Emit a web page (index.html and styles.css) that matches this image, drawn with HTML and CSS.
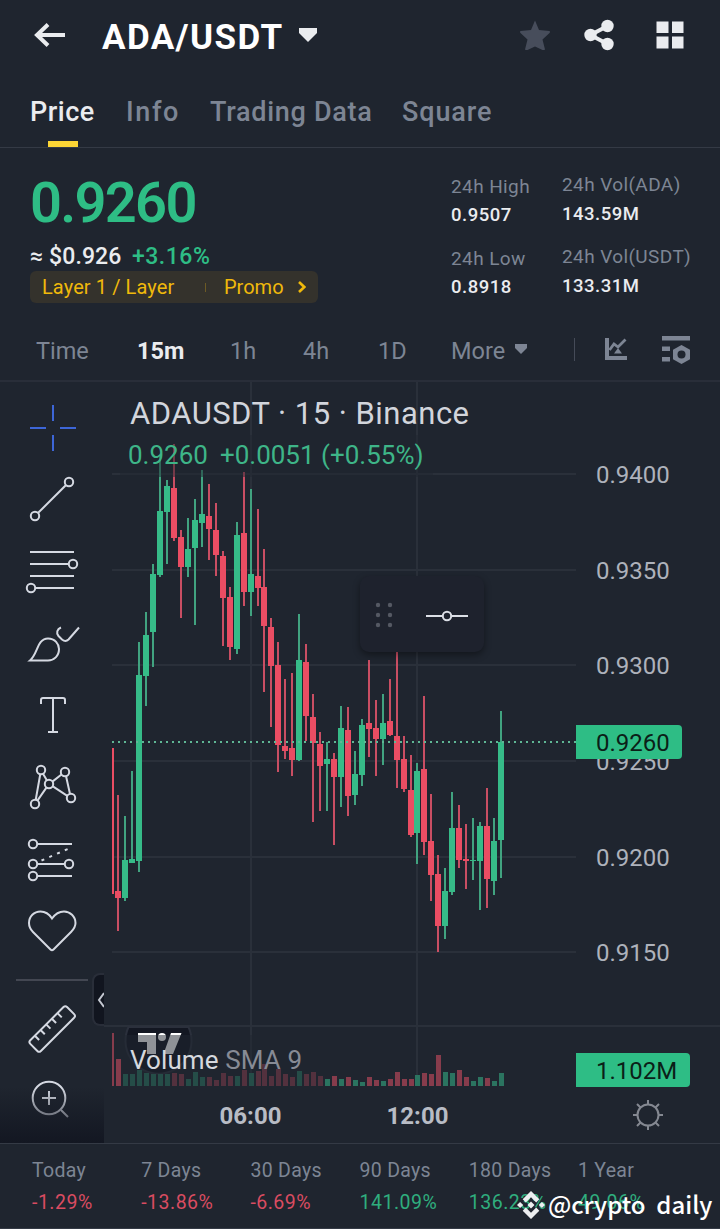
FILE: index.html
```html
<!DOCTYPE html>
<html lang="en">
<head>
  <meta charset="UTF-8">
  <title>ADA/USDT</title>
  <link rel="stylesheet" href="styles.css">
</head>
<body>

<!-- header -->
<header class="topbar">
  <svg class="back" width="32" height="24" viewBox="0 0 32 24"><path d="M31 12H3M14 1.5L3 12L14 22.5" fill="none" stroke="#eaecef" stroke-width="4"/></svg>
  <h1>ADA/USDT</h1>
  <svg class="caret" width="18" height="14" viewBox="0 0 18 14"><path d="M0 0H18V5L9 14L0 5Z" fill="#eaecef"/></svg>
  <div class="actions">
    <svg width="30" height="30" viewBox="0 0 30 30"><path d="M15 0.5L19 10L29.5 11Q30.5 12 29.5 13L22.5 19.5L25 29.5Q24 30.5 22.5 30L15 26.5L7.5 30Q6 30.5 5 29.5L7.500 19.500L0.500 13Q-0.500 12 0.500 11L11 10Z" fill="#474d5b"/></svg>
    <svg width="30" height="32" viewBox="0 0 30 32"><path d="M23.500 7L6.500 16L23.500 25" fill="none" stroke="#eaecef" stroke-width="4"/><circle cx="6.500" cy="16" r="6.200" fill="#eaecef"/><circle cx="23.500" cy="7" r="6.200" fill="#eaecef"/><circle cx="23.500" cy="25" r="6.200" fill="#eaecef"/></svg>
    <svg width="28" height="28" viewBox="0 0 28 28"><path d="M0.500 0.500h12v11.500h-12zM16 0.500h11.500v11.500h-11.500zM0.500 15.500h12v12h-12zM16 15.500h11.500v12h-11.500z" fill="#eaecef"/></svg>
  </div>
</header>

<nav class="tabs">
  <a class="tab active">Price</a>
  <a class="tab info">Info</a>
  <a class="tab trading">Trading Data</a>
  <a class="tab square">Square</a>
</nav>

<!-- price + 24h stats -->
<section class="summary">
  <div class="left">
    <div class="price">0.9260</div>
    <div class="fiat"><b>≈ $0.926</b><span>+3.16%</span></div>
    <div class="pill">
      <span class="layer">Layer 1 / Layer</span>
      <i></i>
      <span class="promo">Promo</span>
      <svg width="8" height="12" viewBox="0 0 8 12"><path d="M1 1L6.300 6L1 11" fill="none" stroke="#f0b90b" stroke-width="2.600"/></svg>
    </div>
  </div>
  <dl class="stats first">
    <dt>24h High</dt><dd>0.9507</dd>
    <dt>24h Low</dt><dd>0.8918</dd>
  </dl>
  <dl class="stats second">
    <dt>24h Vol(ADA)</dt><dd>143.59M</dd>
    <dt>24h Vol(USDT)</dt><dd>133.31M</dd>
  </dl>
</section>

<div class="frames">
  <span>Time</span>
  <span class="active">15m</span>
  <span>1h</span>
  <span>4h</span>
  <span>1D</span>
  <span>More</span>
  <svg width="12" height="10" viewBox="0 0 12 10"><path d="M0 0H12V4L6 10L0 4Z" fill="#7d8594"/></svg>
  <i></i>
  <svg width="22" height="22" viewBox="0 0 22 22"><path d="M2 0V20H22" fill="none" stroke="#7d8594" stroke-width="4"/><path d="M4.500 12L9 6L13 9L20.500 1.500" fill="none" stroke="#7d8594" stroke-width="2.800"/><path d="M13 10L17 15.500H9Z" fill="#7d8594"/></svg>
  <svg class="settings" width="28" height="28" viewBox="0 0 28 28"><path d="M0 0H28V4.500H0ZM0 10.500H8V15H0ZM0 21H8V25.500H0Z" fill="#7d8594"/><path d="M19.500 9L28 13.800V23.200L19.500 28L11 23.200V13.800Z" fill="#7d8594"/><circle cx="19.500" cy="18.500" r="4" fill="#1f252f"/></svg>
</div>

<!-- chart -->
<main class="chart">
  <aside class="tools">
    <svg class="cross" viewBox="0 0 104 72"><path d="M53 13V29M53 43V59M30 36H46M60 36H76"/></svg>
    <svg viewBox="0 0 104 72"><path d="M38.200 48.800L65.800 21.200"/><circle cx="69" cy="18" r="4.200"/><circle cx="35" cy="52" r="4.200"/></svg>
    <svg viewBox="0 0 104 72"><path d="M30 16H74M30 28H68.500M30 40H74M36 52H74"/><circle cx="73" cy="28" r="4.200"/><circle cx="31" cy="52" r="4.200"/></svg>
    <svg viewBox="0 0 104 72"><path d="M30 52.500C38 46 37 30.500 48 30.500C55 30.500 59 36 59 41C59 48 54 52.500 48 52.500Z"/><path d="M61 19.500C57 21 56 25 58.500 28L62 31.500C64.500 33.500 66.500 33.500 68.500 31.500L79 19.500"/></svg>
    <svg viewBox="0 0 104 72"><path d="M41 24V20Q41 18 43 18H63Q65 18 65 20V24M53 18V52M48 52H58"/></svg>
    <svg viewBox="0 0 104 72"><path d="M35.700 48L40.300 22M43 21.800L47 28.500M52.400 29.600L61.500 22.500M66 24L70 42M52.500 34.200L67.300 43.800M46.600 35.400L37.400 48.600"/><circle cx="41" cy="18" r="4.200"/><circle cx="65" cy="20" r="4.200"/><circle cx="49" cy="32" r="4.200"/><circle cx="71" cy="46" r="4.200"/><circle cx="35" cy="52" r="4.200"/></svg>
    <svg viewBox="0 0 104 72"><path d="M38 20H72M38 40H64.500M38 52H72"/><path d="M41.500 36.500L70 24" stroke-dasharray="3 5.500"/><circle cx="33" cy="20" r="4.200"/><circle cx="33" cy="40" r="4.200"/><circle cx="69" cy="40" r="4.200"/><circle cx="33" cy="52" r="4.200"/></svg>
    <svg viewBox="0 0 104 72"><path d="M52 22.500C48.500 17 44 15.500 40.500 15.500C34 15.500 29 20.500 29 27C29 31 30.500 33.500 33 36L50.500 53.500Q52 55 53.500 53.500L71 36C74 33 75.500 31 75.500 27C75.500 20.500 70 15.500 64 15.500C59 15.500 55.500 17.500 52 22.500Z"/></svg>
    <hr>
    <svg viewBox="0 0 104 72"><g transform="translate(52.200 36) rotate(-45)"><rect x="-26" y="-7.500" width="52" height="15" rx="2.500"/><path d="M-17 -7.500V-1.500M-9 -7.500V-1.500M-1 -7.500V-1.500M7 -7.500V-1.500M15 -7.500V-1.500"/></g></svg>
    <svg viewBox="0 0 104 72"><circle cx="49" cy="33" r="16.300"/><path d="M61 45L68 52M42 33H56M49 26V40"/></svg>
    <div class="fade"></div>
    <div class="collapse"><svg width="8" height="16" viewBox="0 0 8 16"><path d="M7 1L2 8L7 15" fill="none" stroke="#c3c7d0" stroke-width="2"/></svg></div>
  </aside>

  <div class="plot">
    <svg id="canvas" width="616" height="763" viewBox="104 380 616 763">
      <g class="grid">
        <path d="M112 474H576M112 570H576M112 665H576M112 761H576M112 857H576M112 952H576"/>
        <path d="M251 382V1086M417 382V1086"/>
        <path d="M104 1026H720"/>
      </g>
      <g class="tv">
        <path d="M128.500 1027H188.500A33 33 0 1 1 128.500 1027Z" fill="#131722" stroke="#2b303c" stroke-width="2"/>
        <path d="M138 1033H156V1054H147V1042H138ZM171 1033H181.500L173 1054H163.500Z" fill="#fff"/>
        <circle cx="162" cy="1037" r="4" fill="#fff"/>
      </g>
      <g id="volume"></g>
      <g id="candles"></g>
      <path class="last" d="M112 742H576"/>
      <g class="axis">
        <text x="596" y="483">0.9400</text>
        <text x="596" y="579">0.9350</text>
        <text x="596" y="674">0.9300</text>
        <text x="596" y="770">0.9250</text>
        <text x="596" y="866">0.9200</text>
        <text x="596" y="961">0.9150</text>
        <path class="tag" d="M576 725H678Q682 725 682 729V755Q682 759 678 759H576Z"/>
        <text class="on-tag" x="596" y="751">0.9260</text>
        <path class="tag" d="M576 1053H686Q690 1053 690 1057V1083Q690 1087 686 1087H576Z"/>
        <text class="on-tag" x="596" y="1079">1.102M</text>
        <text class="time" x="250.500" y="1124">06:00</text>
        <text class="time" x="417.500" y="1124">12:00</text>
      </g>
      <g class="gear" transform="translate(648 1115)">
        <circle r="10.500"/>
        <path d="M0 -10V-15M0 10V15M-10 0H-15M10 0H15M-7.500 -7.500L-11 -11M7.500 -7.500L11 -11M-7.500 7.500L-11 11M7.500 7.500L11 11"/>
      </g>
    </svg>
    <div class="legend symbol">ADAUSDT · 15 · Binance</div>
    <div class="legend change"><span>0.9260</span><span>+0.0051 (+0.55%)</span></div>
    <div class="legend vol"><span>Volume</span> SMA 9</div>
    <div class="floating">
      <svg width="124" height="76" viewBox="360 576 124 76">
        <g fill="#555963"><circle cx="378" cy="605" r="2.200"/><circle cx="390" cy="605" r="2.200"/><circle cx="378" cy="615" r="2.200"/><circle cx="390" cy="615" r="2.200"/><circle cx="378" cy="625" r="2.200"/><circle cx="390" cy="625" r="2.200"/></g>
        <path d="M426 616H442.500M451.500 616H468" stroke="#dcdfe6" stroke-width="2"/>
        <circle cx="447" cy="616" r="4.200" fill="none" stroke="#dcdfe6" stroke-width="2"/>
      </svg>
    </div>
  </div>
</main>

<!-- performance -->
<footer class="perf">
  <div><span>Today</span><b class="down">-1.29%</b></div>
  <div><span>7 Days</span><b class="down">-13.86%</b></div>
  <div><span>30 Days</span><b class="down">-6.69%</b></div>
  <div><span>90 Days</span><b class="up">141.09%</b></div>
  <div><span>180 Days</span><b class="up">136.23%</b></div>
  <div><span>1 Year</span><b class="up">49.06%</b></div>
  <div class="credit">
    <svg width="28" height="28" viewBox="0 0 28 28" fill="#eceef0"><path d="M14 0L22.300 8.300L19.200 11.400L14 6.200L8.800 11.400L5.700 8.300ZM14 28L22.300 19.700L19.200 16.600L14 21.800L8.800 16.600L5.700 19.700ZM3.100 10.900L6.200 14L3.100 17.100L0 14ZM24.900 10.900L28 14L24.900 17.100L21.800 14ZM14 10.500L17.500 14L14 17.500L10.500 14Z"/></svg>
    <span>@crypto&nbsp; daily</span>
  </div>
</footer>

<script src="chart.js"></script>
</body>
</html>
```

FILE: styles.css
```css
* {
  box-sizing: border-box;
}
body {
  margin: 0;
  width: 720px;
  height: 1229px;
  overflow: hidden;
  background: #1f252f;
  color: #eaecef;
  font-family: Roboto, 'Liberation Sans', sans-serif;
}
svg {
  display: block;
  flex: none;
}

/* header */
.topbar {
  display: flex;
  align-items: center;
  height: 72px;
  padding: 0 36px 2px 34px;
}
h1 {
  margin: 5px 0 0 36px;
  width: 197px;
  font-size: 35px;
  line-height: 40px;
  font-weight: 700;
  letter-spacing: 1.4px;
  color: #fff;
}
.actions {
  display: flex;
  align-items: center;
  margin-left: auto;
}
.actions svg:nth-child(2) {
  margin: 0 42px 0 34px;
}
.tabs {
  display: flex;
  height: 76px;
  padding: 0 30px;
  border-bottom: 1px solid #343a45;
}
.tab {
  position: relative;
  height: 75px;
  font-size: 27px;
  line-height: 81px;
  font-weight: 500;
  color: #7d8594;
  white-space: nowrap;
}
.tab.active {
  width: 65px;
  letter-spacing: 0.5px;
  color: #eaecef;
}
.tab.active::after {
  content: '';
  position: absolute;
  left: 18px;
  bottom: 0;
  width: 30px;
  height: 6px;
  background: #fcd535;
}
.tab.info {
  width: 84px;
  margin-left: 31px;
  letter-spacing: 1.6px;
}
.tab.trading {
  width: 192px;
  letter-spacing: 0.7px;
}
.tab.square {
  letter-spacing: 0.9px;
}

/* price */
.summary {
  display: grid;
  grid-template-columns: 421px 111px 1fr;
  height: 174px;
  padding-left: 30px;
}
.left {
  padding-top: 25px;
}
.price {
  font-size: 56px;
  line-height: 60px;
  font-weight: 600;
  letter-spacing: -1.7px;
  color: #2ebd85;
}
.fiat {
  display: flex;
  gap: 10px;
  margin-top: 10px;
  font-size: 23px;
  line-height: 28px;
}
.fiat b {
  width: 92px;
  font-weight: 500;
  letter-spacing: 0.1px;
  white-space: nowrap;
}
.fiat span {
  font-weight: 500;
  letter-spacing: 0.5px;
  color: #2ebd85;
}
.pill {
  display: flex;
  align-items: center;
  width: 288px;
  height: 32px;
  border-radius: 6px;
  padding-left: 12px;
  background: #34322c;
  color: #f0b90b;
  font-size: 20px;
}
.pill .layer {
  width: 163px;
  letter-spacing: 0.1px;
}
.pill i {
  width: 1px;
  height: 9px;
  margin-right: 18px;
  background: #6c5a24;
}
.pill .promo {
  width: 74px;
}
.stats {
  margin: 0;
  padding-top: 25px;
  white-space: nowrap;
}
.stats.second {
  padding-top: 23px;
}
.stats dt {
  font-size: 19px;
  line-height: 28px;
  letter-spacing: 0.4px;
  color: #7d8594;
}
.stats dd {
  margin: 0 0 16px;
  font-size: 18.5px;
  line-height: 28px;
  font-weight: 500;
  letter-spacing: 0.5px;
}
.stats.second dd {
  padding-top: 1px;
  margin-bottom: 15px;
}

/* timeframes */
.frames {
  display: grid;
  grid-template-columns: 101px 93px 73px 75px 73px 64px 59px 31px 57px 28px;
  align-items: center;
  height: 58px;
  padding-left: 36px;
  font-size: 23.5px;
  color: #7d8594;
}
.frames .active {
  font-weight: 700;
  color: #eaecef;
}
.frames i {
  width: 1px;
  height: 23px;
  margin-top: -4px;
  background: #454b58;
}
.frames > svg:nth-of-type(1) {
  margin-top: -4px;
}
.frames > svg:nth-of-type(2) {
  margin-top: -4px;
}
.frames > .settings {
  margin-top: -2px;
}

/* chart */
.chart {
  display: grid;
  grid-template-columns: 104px 616px;
  height: 763px;
  box-shadow: inset 0 2px #292e39;
}
.tools {
  position: relative;
  padding-top: 12px;
}
.tools > svg {
  width: 104px;
  height: 72px;
  fill: none;
  stroke: #d5d9e2;
  stroke-width: 2;
}
.tools .cross {
  stroke: #3d66d8;
}
.tools hr {
  width: 72px;
  height: 2px;
  margin: 11px 16px 12px;
  border: 0;
  background: #434752;
}
.fade {
  position: absolute;
  left: 0;
  right: 0;
  bottom: 0;
  height: 56px;
  background: linear-gradient(rgba(19, 23, 34, 0), #131722);
}
.collapse {
  position: absolute;
  right: 0;
  top: 593px;
  width: 12px;
  height: 53px;
  padding: 17px 0 0 3px;
  border: 2px solid #292e39;
  border-right: 0;
  border-radius: 8px 0 0 8px;
  background: #11151f;
  overflow: hidden;
}
.plot {
  position: relative;
}
.grid path {
  stroke: #2a303a;
  stroke-width: 2;
}
.last {
  stroke: #5fb795;
  stroke-width: 2;
  stroke-dasharray: 2 4;
}
.candle-up {
  fill: #36bb88;
}
.candle-down {
  fill: #ea4d63;
}
.wick-up {
  fill: #41a380;
}
.wick-down {
  fill: #c94e63;
}
.vol-up {
  fill: #2b7460;
}
.vol-down {
  fill: #873c4c;
}
.axis text {
  font-size: 24px;
  fill: #aeb2bb;
}
.axis .tag {
  fill: #2ebd85;
}
.axis .on-tag {
  fill: #0b1f18;
}
.axis .time {
  font-weight: 700;
  text-anchor: middle;
  fill: #b8bcc5;
}
.gear {
  fill: none;
  stroke: #848891;
  stroke-width: 2;
}
.legend {
  position: absolute;
  padding-left: 8px;
  white-space: nowrap;
}
.symbol {
  left: 18px;
  top: 14px;
  font-size: 31px;
  line-height: 40px;
  letter-spacing: 0.48px;
  color: #d2d5dc;
}
.change {
  display: flex;
  gap: 12px;
  left: 16px;
  top: 55px;
  width: 313px;
  height: 42px;
  background: rgba(31, 37, 47, 0.5);
  font-size: 26px;
  line-height: 40px;
  color: #3eb588;
}
.vol {
  left: 18px;
  top: 655px;
  width: 201px;
  height: 52px;
  background: rgba(31, 37, 47, 0.5);
  font-size: 26px;
  line-height: 50px;
  letter-spacing: 0.1px;
  color: #878b95;
}
.vol span {
  color: #d5d8de;
}
.floating {
  position: absolute;
  left: 256px;
  top: 196px;
  border-radius: 9px;
  background: #1e222d;
  box-shadow: 0 3px 7px rgba(0, 0, 0, 0.4);
}

/* performance */
.perf {
  position: relative;
  display: grid;
  grid-template-columns: repeat(6, 109.2px);
  height: 86px;
  padding: 13px 0 0 32px;
  border-top: 1px solid #343a45;
  border-bottom: 1px solid #343a45;
}
.perf span,
.perf b {
  display: block;
  font-size: 19.5px;
  line-height: 28px;
  font-weight: 400;
  white-space: nowrap;
}
.perf span {
  letter-spacing: 0.3px;
  color: #7d8594;
}
.perf b {
  margin-top: 4px;
  letter-spacing: 0.5px;
}
.down {
  color: #d94c61;
}
.up {
  color: #2fae7e;
}
.credit {
  position: absolute;
  left: 517px;
  top: 46px;
  display: flex;
  align-items: center;
  gap: 3px;
}
.credit svg {
  margin-top: -1px;
}
.perf .credit span {
  margin-top: -2px;
  font-family: 'Noto Sans CJK SC', 'Noto Sans', sans-serif;
  font-size: 24px;
  line-height: 32px;
  font-weight: 500;
  letter-spacing: 0;
  color: #fff;
}
```

FILE: chart.js
```js
// x, high, body top, body bottom, low, up, volume height
const bars = [
  [118, 795, 891, 898, 931, 0, 27], [125, 816, 860, 898, 901, 1, 12],
  [132, 771, 859, 863, 863, 1, 12], [139, 642, 675, 861, 872, 1, 16],
  [146, 612, 635, 676, 706, 1, 13], [153, 564, 574, 632, 667, 1, 12],
  [160, 455, 511, 575, 577, 1, 12], [167, 480, 486, 512, 564, 1, 12],
  [174, 444, 488, 538, 541, 0, 13], [181, 530, 537, 567, 618, 0, 12],
  [188, 518, 549, 567, 577, 1, 7], [195, 499, 520, 548, 625, 1, 14],
  [202, 470, 514, 523, 547, 1, 9], [209, 484, 516, 529, 560, 0, 9],
  [216, 503, 530, 555, 576, 0, 6], [223, 551, 556, 598, 646, 0, 13],
  [230, 587, 597, 647, 660, 0, 10], [237, 522, 535, 649, 654, 1, 10],
  [244, 472, 533, 592, 606, 0, 16], [251, 489, 574, 592, 616, 1, 13],
  [258, 509, 576, 588, 606, 0, 15], [264, 549, 587, 626, 692, 0, 22],
  [271, 618, 627, 666, 727, 0, 10], [278, 642, 665, 745, 772, 0, 17],
  [285, 679, 746, 751, 759, 0, 12], [292, 673, 748, 760, 776, 0, 9],
  [299, 614, 660, 760, 761, 1, 15], [306, 644, 662, 716, 741, 0, 12],
  [313, 694, 717, 743, 822, 0, 14], [320, 732, 744, 766, 811, 0, 10],
  [327, 742, 759, 764, 811, 1, 7], [334, 753, 759, 777, 845, 0, 10],
  [341, 706, 728, 777, 807, 1, 7], [348, 707, 730, 796, 816, 0, 9],
  [355, 751, 774, 795, 805, 1, 6], [362, 719, 725, 775, 786, 1, 4],
  [369, 660, 723, 729, 757, 0, 9], [376, 700, 728, 739, 776, 0, 6],
  [383, 694, 723, 739, 765, 1, 5], [390, 679, 721, 735, 736, 0, 7],
  [397, 640, 736, 760, 788, 0, 14], [404, 736, 759, 789, 792, 0, 7],
  [411, 755, 790, 835, 837, 0, 7], [417, 763, 771, 833, 864, 1, 11],
  [424, 696, 769, 842, 855, 0, 13], [431, 794, 841, 875, 901, 0, 12],
  [438, 855, 874, 926, 952, 0, 31], [445, 868, 891, 926, 939, 1, 14],
  [452, 792, 828, 892, 895, 1, 13], [459, 805, 828, 860, 868, 0, 16],
  [466, 824, 859, 861, 889, 0, 9], [473, 818, 860, 861, 880, 1, 5],
  [480, 822, 826, 861, 910, 1, 9], [487, 788, 826, 879, 908, 0, 8],
  [494, 818, 841, 881, 895, 1, 5], [501, 711, 742, 840, 878, 1, 13]
];

function rect(parent, cls, x, y, w, h) {
  const r = document.createElementNS("http://www.w3.org/2000/svg", "rect");
  r.setAttribute("class", cls);
  r.setAttribute("x", x);
  r.setAttribute("y", y);
  r.setAttribute("width", w);
  r.setAttribute("height", h);
  parent.appendChild(r);
}

const candles = document.getElementById("candles");
const volume = document.getElementById("volume");

// the first bar is cut by the left edge
rect(candles, "candle-down", 112, 748, 2, 146);
rect(volume, "vol-down", 112, 1033, 2, 53);

bars.forEach(([x, high, top, bottom, low, up, vol]) => {
  const side = up ? "up" : "down";
  rect(candles, "wick-" + side, x - 1, high, 2, low - high);
  rect(candles, "candle-" + side, x - 3, top, 6, bottom - top);
  rect(volume, "vol-" + side, x - 2, 1086 - vol, 5, vol);
});
```
